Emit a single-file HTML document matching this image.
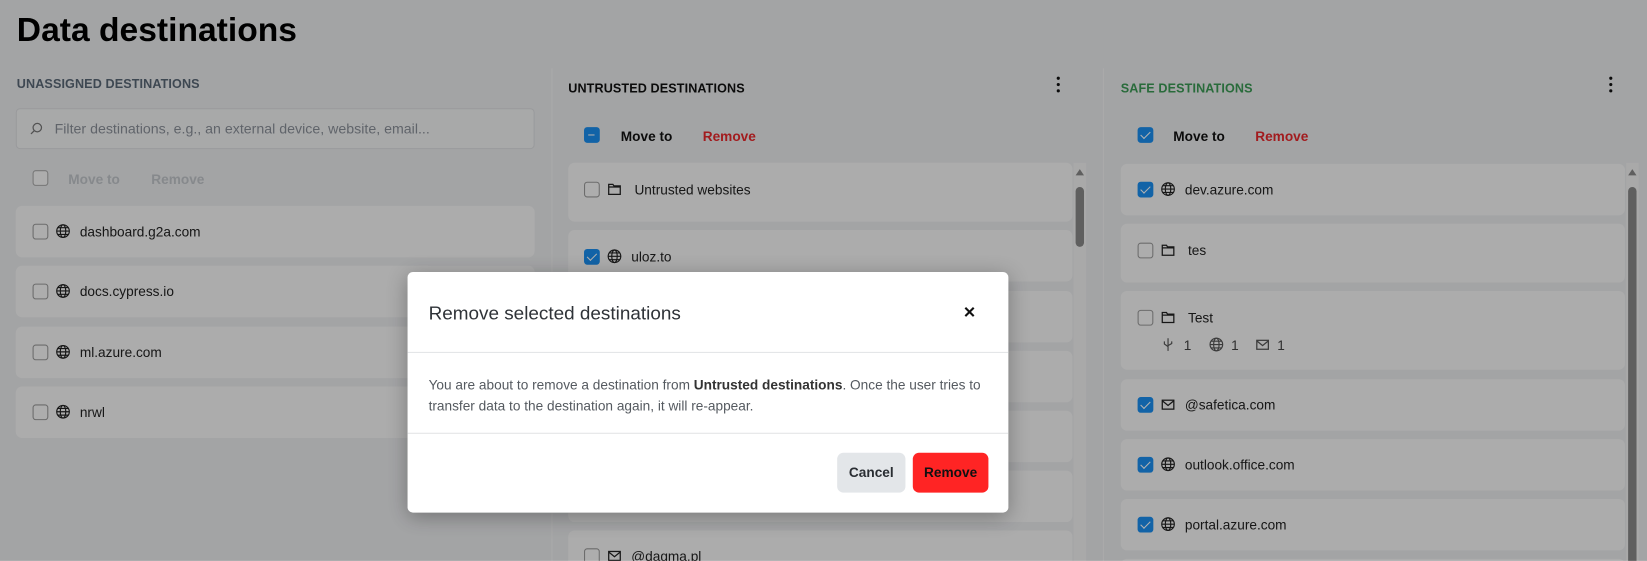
<!DOCTYPE html>
<html><head><meta charset="utf-8"><style>
*{box-sizing:border-box;margin:0;padding:0}
html,body{width:1647px;height:561px;overflow:hidden}
body{background:#eaebed;font-family:"Liberation Sans",sans-serif;position:relative;color:#222}
#w{position:absolute;left:0;top:0;width:1568px;height:534px;transform:scale(1.0504);transform-origin:0 0;overflow:hidden}
.a{position:absolute}
h1{position:absolute;left:16px;top:10px;font-size:32px;font-weight:bold;color:#000}
.hd{position:absolute;font-size:12px;font-weight:bold;letter-spacing:.1px}
.card{position:absolute;background:#f6f6f6;border-radius:6px}
.cb{position:absolute;width:15px;height:15px;border:1.5px solid #9a9a9a;border-radius:3px;background:#f8f8f8}
.cb.on{background:#1a8ff0;border-color:#1a8ff0}
.cb.on:after{content:"";position:absolute;left:4px;top:1px;width:4px;height:8px;border:solid #fff;border-width:0 1.5px 1.5px 0;transform:rotate(45deg)}
.cb.ind{background:#1a8ff0;border-color:#1a8ff0}
.cb.ind:after{content:"";position:absolute;left:3px;top:5.5px;width:6px;height:1.5px;background:#fff}
.t{position:absolute;font-size:13px;color:#222}
.ic{position:absolute}
.mv{position:absolute;font-size:13px;font-weight:bold}
.sep{position:absolute;top:65px;width:1px;height:496px;background:#f4f4f4}
.sb{position:absolute;width:12px;background:#f2f2f2}
.th{position:absolute;width:8px;left:2px;background:#888;border-radius:4px}
.arr{position:absolute;left:2px;top:6px;width:0;height:0;border-left:4px solid transparent;border-right:4px solid transparent;border-bottom:6px solid #888}
.dots{position:absolute;width:3px}
.dots i{display:block;width:3px;height:3px;border-radius:50%;background:#111;margin-bottom:3px}
#ov{position:absolute;left:0;top:0;width:1647px;height:561px;background:rgba(0,0,0,.3)}
#m{position:absolute;left:388px;top:259px;width:572px;height:229px;background:#fff;border-radius:5px;box-shadow:0 4px 20px rgba(0,0,0,.3)}
</style></head><body>
<div id="w">
<h1>Data destinations</h1>

<div class="hd" style="left:16px;top:73px;color:#5a6776">UNASSIGNED DESTINATIONS</div>
<div class="a" style="left:15px;top:103px;width:494px;height:39px;border:1px solid #dcdde0;border-radius:4px;background:#f1f2f3"></div>
<svg class="ic" style="left:28px;top:116px" width="13" height="13" viewBox="0 0 13 13"><circle cx="7.5" cy="5.5" r="4" fill="none" stroke="#777" stroke-width="1.2"/><path d="M4.6 8.4L1.5 11.5" stroke="#777" stroke-width="1.2"/></svg>
<div class="t" style="left:52px;top:115px;color:#8a9099;font-size:13.5px">Filter destinations, e.g., an external device, website, email...</div>
<div class="cb" style="left:31px;top:162px;border-color:#aaa"></div>
<div class="mv" style="left:65px;top:163px;color:#c0c4c9">Move to</div>
<div class="mv" style="left:144px;top:163px;color:#c0c4c9">Remove</div>

<div class="card" style="left:15px;top:196px;width:494px;height:49px"></div>
<div class="card" style="left:15px;top:253px;width:494px;height:49px"></div>
<div class="card" style="left:15px;top:311px;width:494px;height:49px"></div>
<div class="card" style="left:15px;top:368px;width:494px;height:49px"></div>

<div class="sep" style="left:525px"></div>
<div class="sep" style="left:1050px"></div>

<div class="hd" style="left:541px;top:77px;color:#111">UNTRUSTED DESTINATIONS</div>
<div class="dots" style="left:1006px;top:73px"><i></i><i></i><i></i></div>
<div class="cb ind" style="left:556px;top:121px"></div>
<div class="mv" style="left:591px;top:122px;color:#111">Move to</div>
<div class="mv" style="left:669px;top:122px;color:#e8282b">Remove</div>
<div class="card" style="left:541px;top:155px;width:480px;height:56px"></div>
<div class="card" style="left:541px;top:219px;width:480px;height:49px"></div>
<div class="card" style="left:541px;top:277px;width:480px;height:49px"></div>
<div class="card" style="left:541px;top:334px;width:480px;height:49px"></div>
<div class="card" style="left:541px;top:391px;width:480px;height:49px"></div>
<div class="card" style="left:541px;top:448px;width:480px;height:49px"></div>
<div class="card" style="left:541px;top:505px;width:480px;height:56px"></div>
<div class="sb" style="left:1022px;top:155px;height:406px"><div class="arr"></div><div class="th" style="top:23px;height:57px"></div></div>

<div class="hd" style="left:1067px;top:77px;color:#3c9a55">SAFE DESTINATIONS</div>
<div class="dots" style="left:1532px;top:73px"><i></i><i></i><i></i></div>
<div class="cb on" style="left:1083px;top:121px"></div>
<div class="mv" style="left:1117px;top:122px;color:#111">Move to</div>
<div class="mv" style="left:1195px;top:122px;color:#e8282b">Remove</div>
<div class="card" style="left:1067px;top:156px;width:480px;height:49px"></div>
<div class="card" style="left:1067px;top:213px;width:480px;height:56px"></div>
<div class="card" style="left:1067px;top:277px;width:480px;height:75px"></div>
<div class="card" style="left:1067px;top:361px;width:480px;height:49px"></div>
<div class="card" style="left:1067px;top:418px;width:480px;height:49px"></div>
<div class="card" style="left:1067px;top:475px;width:480px;height:49px"></div>
<div class="card" style="left:1067px;top:532px;width:480px;height:40px"></div>
<div class="sb" style="left:1548px;top:155px;height:406px"><div class="arr"></div><div class="th" style="top:23px;height:390px"></div></div>

<div id="items"></div>
<script>
var G='<svg width="14" height="14" viewBox="0 0 14 14" fill="none" stroke="#222" stroke-width="1.1"><circle cx="7" cy="7" r="6"/><ellipse cx="7" cy="7" rx="2.6" ry="6"/><path d="M1 7h12M2 3.8h10M2 10.2h10"/></svg>';
var F='<svg width="14" height="14" viewBox="0 0 14 14" fill="none" stroke="#222" stroke-width="1.2"><path d="M1.5 2.5h4l1 1.5h6v8h-11z M1.5 5h11"/></svg>';
var M='<svg width="14" height="14" viewBox="0 0 14 14" fill="none" stroke="#222" stroke-width="1.2"><rect x="1.5" y="3" width="11" height="8.5"/><path d="M1.5 3.5L7 8l5.5-4.5"/></svg>';
var U='<svg width="12" height="14" viewBox="0 0 12 14" fill="none" stroke="#555" stroke-width="1.1"><path d="M6 1v12M6 9L2.5 6.5V4M6 8l3.5-2V4"/></svg>';
var it=[
[31,213,0,G,'dashboard.g2a.com'],[31,270,0,G,'docs.cypress.io'],[31,328,0,G,'ml.azure.com'],[31,385,0,G,'nrwl'],
[556,173,0,F,'Untrusted websites'],[556,237,1,G,'uloz.to'],[556,522,0,M,'@dagma.pl'],
[1083,173,1,G,'dev.azure.com'],[1083,231,0,F,'tes'],[1083,295,0,F,'Test'],[1083,378,1,M,'@safetica.com'],[1083,435,1,G,'outlook.office.com'],[1083,492,1,G,'portal.azure.com']];
var h='';
it.forEach(function(a){var x=a[0],y=a[1];
h+='<div class="cb'+(a[2]?' on':'')+'" style="left:'+x+'px;top:'+y+'px"></div>';
h+='<div class="ic" style="left:'+(x+22)+'px;top:'+(y)+'px">'+a[3]+'</div>';
h+='<div class="t" style="left:'+(x+(a[3]==F?48:45))+'px;top:'+(y)+'px">'+a[4]+'</div>';});
h+='<div class="ic" style="left:1106px;top:321px">'+U+'</div><div class="t" style="left:1127px;top:321px;color:#444">1</div>';
h+='<div class="ic" style="left:1151px;top:321px">'+G.replace(/#222/,'#555')+'</div><div class="t" style="left:1172px;top:321px;color:#444">1</div>';
h+='<div class="ic" style="left:1195px;top:321px">'+M.replace(/#222/,'#555')+'</div><div class="t" style="left:1216px;top:321px;color:#444">1</div>';
document.getElementById('items').innerHTML=h;
</script>

<div id="ov"></div>
<div id="m">
  <div class="a" style="left:20px;top:29px;font-size:18px;color:#2f3338">Remove selected destinations</div>
  <svg class="a" style="left:530px;top:33px" width="10" height="10" viewBox="0 0 10 10"><path d="M1 1l8 8M9 1L1 9" stroke="#111" stroke-width="2"/></svg>
  <div class="a" style="left:0;top:76px;width:572px;height:1px;background:#e3e4e6"></div>
  <div class="a" style="left:20px;top:98px;width:540px;font-size:13px;line-height:20px;color:#555a60">You are about to remove a destination from <b style="color:#333">Untrusted destinations</b>. Once the user tries to transfer data to the destination again, it will re-appear.</div>
  <div class="a" style="left:0;top:153px;width:572px;height:1px;background:#e3e4e6"></div>
  <div class="a" style="left:409px;top:172px;width:65px;height:38px;background:#e3e6e9;border-radius:6px;font-size:13px;font-weight:bold;color:#2a2e33;text-align:center;line-height:38px">Cancel</div>
  <div class="a" style="left:481px;top:172px;width:72px;height:38px;background:#ff2424;border-radius:6px;font-size:13px;font-weight:bold;color:#111;text-align:center;line-height:38px">Remove</div>
</div>
</div>
</body></html>
